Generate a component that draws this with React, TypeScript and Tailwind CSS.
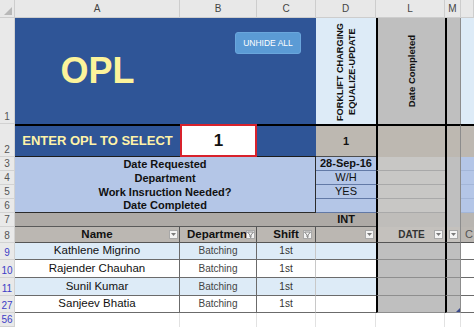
import React from "react";

// Small dropdown arrow button shown in table header cells
function DropBtn({ filter }: { filter?: boolean }) {
  return (
    <div className="w-[9px] h-[9px] bg-[#f4f4f4] border border-[#a8a8a8] flex items-center justify-center shrink-0">
      {filter ? (
        <svg width="7" height="7" viewBox="0 0 7 7">
          <path d="M0.5 1h6L4 4v2.5L3 6V4z" fill="none" stroke="#6a6a6a" strokeWidth="0.8" />
        </svg>
      ) : (
        <svg width="5" height="3" viewBox="0 0 5 3">
          <path d="M0 0h5L2.5 3z" fill="#7a7a7a" />
        </svg>
      )}
    </div>
  );
}

function RowNum({ n, blue }: { n: string; blue?: boolean }) {
  return (
    <div
      className={`flex items-end justify-center bg-[#e9e9e9] border-b border-r border-[#d2d2d2] pb-px text-[10px] leading-none ${
        blue ? "text-[#3d3dc6]" : "text-[#555555]"
      }`}
    >
      {n}
    </div>
  );
}

function ColHead({ label }: { label: string }) {
  return (
    <div className="flex items-center justify-center bg-[#e8e8e8] border-r border-b border-[#cdcdcd] text-[10px] text-[#444444]">
      {label}
    </div>
  );
}

const people = [
  { num: "9", name: "Kathlene Migrino", shade: true },
  { num: "10", name: "Rajender Chauhan", shade: false },
  { num: "11", name: "Sunil Kumar", shade: true },
  { num: "27", name: "Sanjeev Bhatia", shade: false },
];

const labels = ["Date Requested", "Department", "Work Insruction Needed?", "Date Completed"];
const values = [
  { v: "28-Sep-16", bold: true },
  { v: "W/H", bold: false },
  { v: "YES", bold: false },
  { v: "", bold: false },
];

export default function App() {
  return (
    <div className="w-[474px] h-[327px] overflow-hidden bg-white font-['Liberation_Sans',Arial,sans-serif] text-[#111111]">
      <div className="grid grid-cols-[15px_165px_77px_59px_60px_69px_16px_13px] grid-rows-[18px_106px_33px_14px_14px_14px_14px_14px_16px_17px_18px_18px_17px_14px]">
        {/* Column headers */}
        <div className="relative bg-[#e8e8e8] border-r border-b border-[#cdcdcd]">
          <svg className="absolute right-[2px] bottom-[2px]" width="8" height="8" viewBox="0 0 8 8">
            <path d="M8 0V8H0z" fill="#b8b8b8" />
          </svg>
        </div>
        <ColHead label="A" />
        <ColHead label="B" />
        <ColHead label="C" />
        <ColHead label="D" />
        <ColHead label="L" />
        <ColHead label="M" />
        <ColHead label="" />

        {/* Row 1 */}
        <RowNum n="1" />
        <div className="col-span-3 relative bg-[#2f5597] flex">
          <div className="w-[165px] flex items-center justify-center">
            <span className="text-[36px] font-bold leading-none text-[#fcf39b]">OPL</span>
          </div>
          <div className="absolute left-[220px] top-[14px] w-[66px] h-[22px] rounded-[3px] bg-[#5b9bd5] border border-[#6aa6dc] flex items-center justify-center text-[8.5px] font-medium text-white">
            UNHIDE ALL
          </div>
        </div>
        <div className="bg-[#ddebf7] flex items-end justify-center pb-[3px]">
          <div className="[writing-mode:vertical-rl] rotate-180 text-center font-bold text-[9.2px] leading-[12px] whitespace-nowrap">
            FORKLIFT CHARGING
            <br />
            EQUALIZE-UPDATE
          </div>
        </div>
        <div className="bg-[#bfbfbf] border-l-2 border-black flex items-center justify-center">
          <div className="[writing-mode:vertical-rl] rotate-180 font-bold text-[9.5px] leading-none whitespace-nowrap">
            Date Completed
          </div>
        </div>
        <div className="bg-[#bfbfbf] border-l-2 border-r border-l-black border-r-[#8c8c8c]" />
        <div className="bg-[#ddebf7]" />

        {/* Row 2 */}
        <RowNum n="2" />
        <div className="bg-[#2f5597] border-t-2 border-b border-t-black border-b-[#1c1c1c] flex items-center justify-center text-[13px] font-bold text-[#fff3a8]">
          ENTER OPL TO SELECT
        </div>
        <div className="bg-white border-2 border-[#d8222c] flex items-center justify-center text-[17px] font-bold">
          1
        </div>
        <div className="bg-[#2f5597] border-t-2 border-b border-t-black border-b-[#1c1c1c]" />
        <div className="bg-[#bdb8b1] border-t-2 border-b border-t-black border-b-[#4d4d4d] flex items-center justify-center text-[11px] font-bold">
          1
        </div>
        <div className="bg-[#bdb8b1] border-t-2 border-l-2 border-black" />
        <div className="bg-[#bdb8b1] border-t-2 border-l-2 border-r border-t-black border-l-black border-r-[#8c8c8c]" />
        <div className="bg-[#bdb8b1] border-t-2 border-black" />

        {/* Rows 3-6 */}
        {labels.map((label, i) => (
          <React.Fragment key={label}>
            <RowNum n={String(i + 3)} />
            <div
              className={`col-span-3 bg-[#b4c6e7] border-r border-[#2b2b2b] flex items-center justify-center text-[11px] font-bold leading-none ${
                i === 3 ? "border-b" : ""
              }`}
            >
              {label}
            </div>
            <div
              className={`bg-[#b4c6e7] border-b border-[#6279a6] flex items-center justify-center text-[11px] leading-none ${
                values[i].bold ? "font-bold" : "font-normal"
              }`}
            >
              {values[i].v}
            </div>
            <div className="bg-[#c8c7c5] border-l-2 border-b border-l-black border-b-[#a9a9a9]" />
            <div className="bg-[#bfbfbf] border-l-2 border-r border-l-black border-r-[#8c8c8c]" />
            <div className="bg-[#b4c6e7] border-b border-[#a3b6d8]" />
          </React.Fragment>
        ))}

        {/* Row 7 */}
        <RowNum n="7" />
        <div className="col-span-3 bg-[#aeaaa6] border-b border-[#5a5a5a]" />
        <div className="bg-[#aeaaa6] border-b border-[#5a5a5a] flex items-center justify-center text-[11px] font-bold leading-none">
          INT
        </div>
        <div className="bg-[#bfbdba] border-l-2 border-black" />
        <div className="bg-[#bfbfbf] border-l-2 border-r border-l-black border-r-[#8c8c8c]" />
        <div className="bg-[#b8b5b1]" />

        {/* Row 8 - table header */}
        <RowNum n="8" />
        <div className="relative bg-[#bbb7b2] border-r border-b border-[#555555] flex items-center justify-center text-[11.5px] font-bold leading-none">
          Name
          <div className="absolute right-[1px] top-[3px]">
            <DropBtn />
          </div>
        </div>
        <div className="bg-[#bbb7b2] border-r border-b border-[#555555] flex items-center pl-[7px] pr-[1px] text-[11.5px] font-bold leading-none">
          <span className="overflow-hidden whitespace-nowrap flex-1">Departmen</span>
          <DropBtn filter />
        </div>
        <div className="relative bg-[#bbb7b2] border-r border-b border-[#555555] flex items-center justify-center text-[11.5px] font-bold leading-none">
          Shift
          <div className="absolute right-[3px] top-[3px]">
            <DropBtn filter />
          </div>
        </div>
        <div className="bg-[#bbb7b2] border-b border-[#555555] flex items-center justify-end pr-[2px]">
          <DropBtn />
        </div>
        <div className="relative bg-[#c4c1bd] border-l-2 border-b border-l-black border-b-[#555555] flex items-center justify-center text-[10px] font-bold leading-none text-[#333333]">
          DATE
          <div className="absolute right-[2px] top-[3px]">
            <DropBtn />
          </div>
        </div>
        <div className="bg-[#c4c1bd] border-l-2 border-r border-b border-l-black border-r-[#8c8c8c] border-b-[#555555] flex items-center justify-center">
          <DropBtn />
        </div>
        <div className="bg-[#bbb7b2] border-b border-[#555555] overflow-hidden flex items-center pl-[4px] text-[11px] text-[#555555] leading-none">
          C
        </div>

        {/* Data rows */}
        {people.map((p, idx) => {
          const bg = p.shade ? "bg-[#ddebf7]" : "bg-white";
          return (
            <React.Fragment key={p.num}>
              <RowNum n={p.num} blue />
              <div className={`${bg} border-r border-b border-[#6b6b6b] flex items-center justify-center text-[11.5px] leading-none`}>
                {p.name}
              </div>
              <div className={`${bg} border-r border-b border-[#6b6b6b] flex items-center justify-center text-[10px] leading-none text-[#444444]`}>
                Batching
              </div>
              <div className={`${bg} border-r border-b border-r-[#c8c8c8] border-b-[#6b6b6b] flex items-center justify-center text-[10px] leading-none text-[#333333]`}>
                1st
              </div>
              <div className={`${bg} border-b border-[#6b6b6b]`} />
              <div className="bg-[#bfbfbf] border-l-2 border-b border-l-black border-b-[#8e8e8e]" />
              <div className="relative bg-[#bfbfbf] border-l-2 border-r border-b border-l-black border-r-[#8c8c8c] border-b-[#8e8e8e]">
                {idx === people.length - 1 && (
                  <svg className="absolute right-0 bottom-0" width="4" height="4" viewBox="0 0 4 4">
                    <path d="M4 0V4H0z" fill="#3a4a8c" />
                  </svg>
                )}
              </div>
              <div className="bg-white border-b border-[#6b6b6b]" />
            </React.Fragment>
          );
        })}

        {/* Row 56 */}
        <RowNum n="56" blue />
        <div className="border-r border-[#e2e2e2]" />
        <div className="border-r border-[#e2e2e2]" />
        <div className="border-r border-[#e2e2e2]" />
        <div className="border-r border-[#e2e2e2]" />
        <div className="border-r border-[#e2e2e2]" />
        <div className="border-r border-[#e2e2e2]" />
        <div />
      </div>
    </div>
  );
}
